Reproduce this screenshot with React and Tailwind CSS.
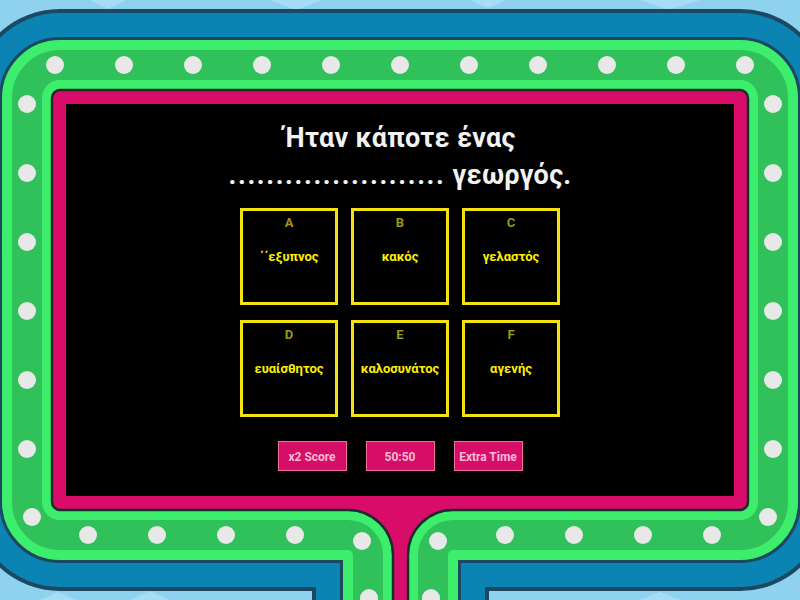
import React from 'react';

const PATH =
  'M368 640 L368 555 A20 20 0 0 0 348 535 L60 535 A33 33 0 0 1 27 502 L27 98 A33 33 0 0 1 60 65 L740 65 A33 33 0 0 1 773 98 L773 502 A33 33 0 0 1 740 535 L453 535 A20 20 0 0 0 433 555 L433 640';

const PINK =
  'M60 90 L740 90 A8 8 0 0 1 748 98 L748 502 A8 8 0 0 1 740 510 L453 510 A45 45 0 0 0 408 555 L408 640 L393 640 L393 555 A45 45 0 0 0 348 510 L60 510 A8 8 0 0 1 52 502 L52 98 A8 8 0 0 1 60 90 Z';

const top = [55, 124, 193, 262, 331, 400, 469, 538, 607, 676, 745].map((x) => [x, 65]);
const sides = [104, 173, 242, 311, 380, 449].flatMap((y) => [[27, y], [773, y]]);
const bottom = [88, 157, 226, 295].flatMap((x) => [[x, 535], [800 - x, 535]]);
const DOTS = [
  ...top,
  ...sides,
  ...bottom,
  [32, 517], [768, 517],
  [362, 541], [438, 541],
  [369, 598], [431, 598],
];

function Frame() {
  return (
    <svg className="absolute inset-0" width="800" height="600" viewBox="0 0 800 600">
      <g fill="#a6dcf4">
        <polygon points="90,0 108,9 126,0" />
        <polygon points="270,0 296,10 322,0" />
        <polygon points="470,0 488,8 506,0" />
        <polygon points="640,0 668,10 700,0" />
        <polygon points="40,600 58,592 76,600" />
        <polygon points="130,600 150,591 170,600" />
        <polygon points="640,600 660,592 680,600" />
      </g>
      <g fill="none" strokeLinejoin="round">
        <path d={PATH} stroke="#1d4862" strokeWidth="112" />
        <path d={PATH} stroke="#0b83b3" strokeWidth="104" />
        <path d={PATH} stroke="#1d4862" strokeWidth="56" />
        <path d={PATH} stroke="#3cee6b" strokeWidth="50" />
        <path d={PATH} stroke="#31c15a" strokeWidth="30" />
      </g>
      {DOTS.map(([x, y], i) => (
        <circle key={i} cx={x} cy={y} r="9" fill="#e8e8e8" />
      ))}
      <path d={PINK} fill="#d90c69" stroke="#1b2c2e" strokeWidth="2.5" />
    </svg>
  );
}

const answers = [
  ['A', '΄΄εξυπνος'],
  ['B', 'κακός'],
  ['C', 'γελαστός'],
  ['D', 'ευαίσθητος'],
  ['E', 'καλοσυνάτος'],
  ['F', 'αγενής'],
];

const powerUps = ['x2 Score', '50:50', 'Extra Time'];

export default function App() {
  return (
    <div className="relative w-[800px] h-[600px] overflow-hidden bg-[#8fd2f0] font-[family-name:Roboto,sans-serif]">
      <Frame />
      <div className="relative pt-[104px] px-[66px]">
        <div className="h-[392px] bg-black flex flex-col items-center pt-[16px]">
          <p className="text-center text-[27px] leading-[37px] font-bold tracking-[0.3px] text-[#f2f2f2]">
            Ήταν κάποτε ένας
            <br />
            <span className="tracking-[1.6px]">.......................</span> γεωργός.
          </p>

          <div className="mt-[14px] grid grid-cols-3 gap-x-[13px] gap-y-[15px]">
            {answers.map(([letter, text]) => (
              <div
                key={letter}
                className="w-[98px] h-[97px] border-[3px] border-[#f3e30c] flex flex-col items-center pt-[4px]"
              >
                <span className="text-[13px] leading-[16px] font-bold text-[#9e9617]">{letter}</span>
                <span className="mt-[18px] text-[13px] leading-[16px] font-bold text-[#fff000]">{text}</span>
              </div>
            ))}
          </div>

          <div className="mt-[24px] flex gap-[19px]">
            {powerUps.map((label) => (
              <div
                key={label}
                className="w-[69px] h-[30px] flex items-center justify-center pt-[2px] bg-[#d50f68] border border-[#ee6ea2] text-[12px] font-bold text-[#f8b9d5]"
              >
                {label}
              </div>
            ))}
          </div>
        </div>
      </div>
    </div>
  );
}
